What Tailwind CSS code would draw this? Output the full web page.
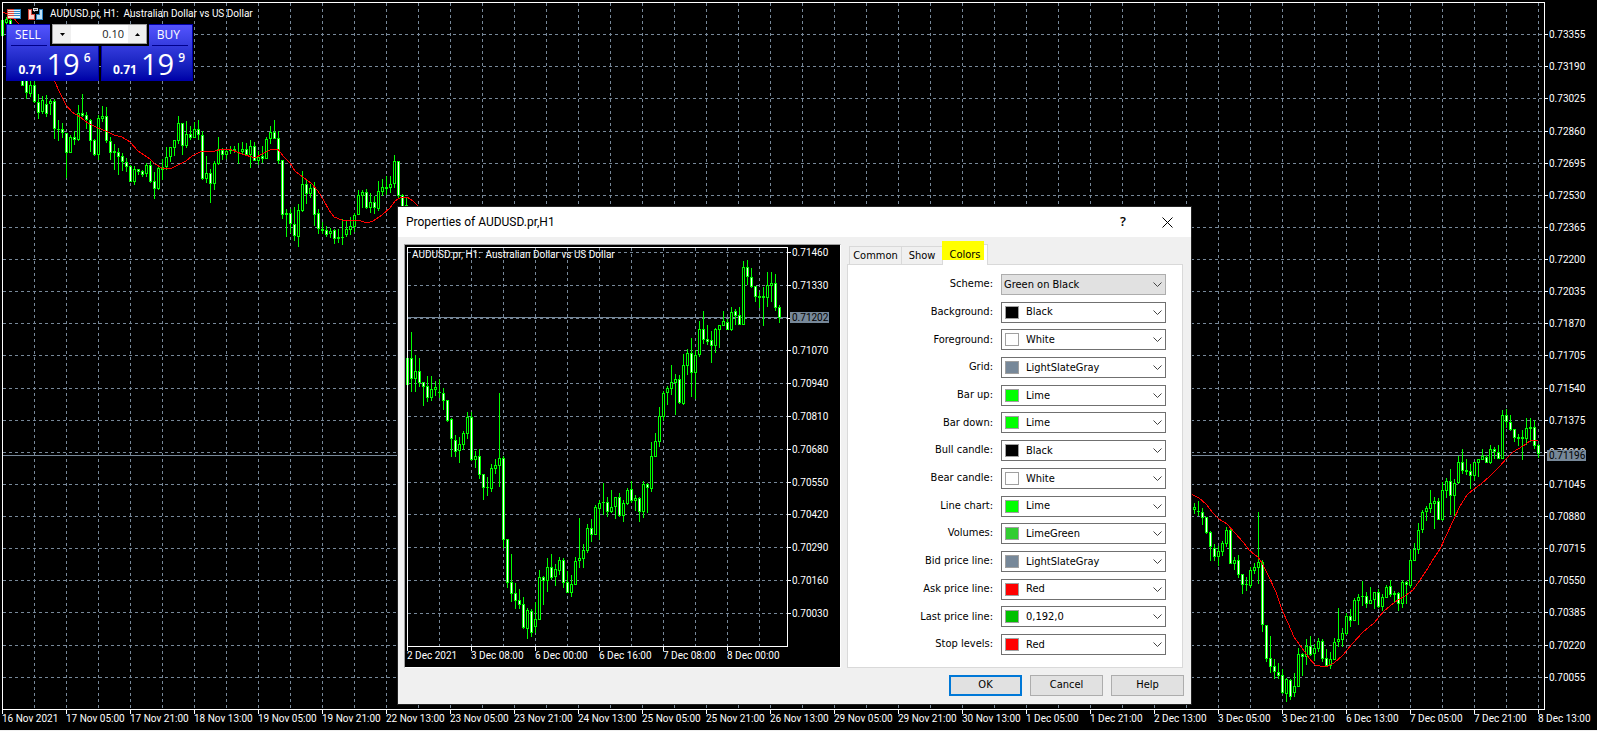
<!DOCTYPE html>
<html lang="en">
  <head>
    <meta charset="UTF-8" />
    <meta name="viewport" content="width=device-width, initial-scale=1.0" />
    <title>AUDUSD.pr, H1</title>
    <script src="https://cdn.jsdelivr.net/npm/@tailwindcss/browser@4"></script>
  </head>

  <body class="bg-black font-['DejaVu_Sans_Condensed','DejaVu_Sans',sans-serif] text-[11px]">
    <main class="relative h-screen min-h-[720px] overflow-hidden border-b border-[#f0f0f0]">
      <svg id="mainChart" class="block h-full w-full" role="img" aria-label="AUDUSD.pr H1 chart"></svg>

      <!-- chart caption -->
      <div class="absolute top-[6px] left-[7px] flex items-center gap-[7px] text-white">
        <svg width="14" height="12" viewBox="0 0 14 12" shape-rendering="crispEdges" aria-hidden="true">
          <path fill="#d9483b" d="M0 1h7v10H0z" />
          <path fill="#2d84c4" d="M7 1h7v10H7z" />
          <path fill="#ffe3de" d="M1 2h6v1H1zM1 4h6v1H1zM1 6h6v1H1zM1 8h6v2H1z" />
          <path fill="#e4f3fc" d="M7 2h6v1H7zM7 4h6v1H7zM7 6h6v1H7zM7 8h6v2H7z" />
        </svg>
        <svg width="15" height="12" viewBox="0 0 15 12" shape-rendering="crispEdges" aria-hidden="true">
          <path fill="#d9483b" d="M0 1h4v5h3v6H0z" />
          <path fill="#ffd5cf" d="M1 2h2v5h3v4H1z" />
          <path fill="#2d84c4" d="M15 1h-4v5H8v6h7z" />
          <path fill="#bfe2f8" d="M14 2h-2v5H9v4h5z" />
          <path fill="#ddd" d="M5 0h5v3H5z" />
          <path fill="#444" d="M6 1h3v1H6z" />
        </svg>
        <p class="font-['Roboto',sans-serif] leading-4 whitespace-pre text-[10px]">AUDUSD.pr, H1:  Australian Dollar vs US Dollar</p>
      </div>

      <!-- one click trading -->
      <section class="absolute top-6 left-[6px] flex gap-[2px] font-['Open_Sans','Noto_Sans',sans-serif] text-white">
        <button class="flex h-[57px] w-[93px] flex-col justify-between border border-[#0000a8] bg-linear-to-b from-[#5454ff] to-[#0000a8] text-left">
          <span class="ml-1 w-9 border-b border-[#00008c] pl-1 text-[12px] leading-5">SELL</span>
          <span class="flex w-full items-end justify-center gap-1 pb-[2px] pl-1">
            <span class="text-[12px] leading-4 font-bold">0.71</span>
            <span class="flex gap-1"><span class="text-[29px] leading-7">19</span><span class="text-[12px] leading-4 font-semibold">6</span></span>
          </span>
        </button>
        <button class="flex h-[57px] w-[92px] flex-col justify-between border border-[#0000a8] bg-linear-to-b from-[#5454ff] to-[#0000a8] text-right">
          <span class="mr-1 ml-auto w-9 border-b border-[#00008c] pr-2 text-[12px] leading-5">BUY</span>
          <span class="flex w-full items-end justify-center gap-1 pb-[2px] pl-1">
            <span class="text-[12px] leading-4 font-bold">0.71</span>
            <span class="flex gap-1"><span class="text-[29px] leading-7">19</span><span class="text-[12px] leading-4 font-semibold">9</span></span>
          </span>
        </button>
        <div class="absolute top-0 left-11 flex h-[22px] w-[99px] bg-black px-[2px] pb-[2px]">
          <div class="flex flex-1 border border-[#a0a0a0] bg-white text-black">
            <button class="flex w-[18px] items-center justify-center bg-[#f0f0f0]" aria-label="Decrease volume">
              <svg width="5" height="3" viewBox="0 0 5 3" aria-hidden="true"><path d="M0 0h5L2.5 3z" /></svg>
            </button>
            <input class="w-0 flex-1 bg-white pr-1 text-right text-[11px] leading-4 text-[#222]" value="0.10" aria-label="Volume" />
            <button class="flex w-[18px] items-center justify-center bg-[#f0f0f0]" aria-label="Increase volume">
              <svg width="5" height="3" viewBox="0 0 5 3" aria-hidden="true"><path d="M0 3h5L2.5 0z" /></svg>
            </button>
          </div>
        </div>
      </section>

      <!-- properties dialog -->
      <section class="absolute top-[207px] left-[398px] w-[793px] bg-[#f0f0f0] text-black outline outline-[#222]" role="dialog" aria-labelledby="dialogTitle">
        <header class="flex h-[30px] items-center bg-white pr-4 pl-2">
          <h1 id="dialogTitle" class="flex-1 font-['Roboto',sans-serif] text-[12px]">Properties of AUDUSD.pr,H1</h1>
          <button class="w-5 font-['Open_Sans',sans-serif] text-[13px] font-semibold" aria-label="Help on item">?</button>
          <button class="ml-7 mr-[2px] flex w-3 justify-center" aria-label="Close">
            <svg width="11" height="11" viewBox="0 0 11 11" aria-hidden="true"><path d="M.5.5l10 10M10.5.5l-10 10" stroke="#000" fill="none" /></svg>
          </button>
        </header>

        <div class="flex gap-[6px] pt-[7px] pr-2 pl-[6px]">
          <div class="relative flex-1 border border-t-[#a0a0a0] border-r-white border-b-white border-l-[#a0a0a0] bg-black">
            <svg id="previewChart" class="block h-[422px] w-full" role="img" aria-label="Preview of the color scheme"></svg>
            <p class="absolute top-0 left-[7px] font-['Roboto',sans-serif] leading-5 whitespace-pre text-[10px] text-white">AUDUSD.pr, H1:  Australian Dollar vs US Dollar</p>
          </div>

          <div class="flex w-[336px] flex-col">
            <nav class="relative flex h-5 items-end pl-[2px]" role="tablist">
              <button role="tab" class="h-[18px] w-[53px] border border-b-0 border-[#d9d9d9] pt-px">Common</button>
              <button role="tab" class="h-[18px] w-10 border-t border-[#d9d9d9] pt-px">Show</button>
              <button role="tab" aria-selected="true" class="relative -mb-px h-[21px] w-[46px] border border-b-0 border-[#d9d9d9] bg-white">
                <span class="absolute -top-1 -left-px h-[19px] w-[42px] bg-[#ffff00]" aria-hidden="true"></span>
                <span class="relative">Colors</span>
              </button>
            </nav>
            <form id="colors" class="flex flex-1 flex-col justify-between border border-[#d9d9d9] bg-white pt-[9px] pr-4 pb-3"></form>
          </div>
        </div>

        <footer class="flex justify-end gap-2 px-[7px] pt-[7px] pb-2">
          <button class="h-[21px] w-[73px] border-2 border-[#0078d7] bg-[#e1e1e1]">OK</button>
          <button class="h-[21px] w-[73px] border border-[#adadad] bg-[#e1e1e1]">Cancel</button>
          <button class="h-[21px] w-[73px] border border-[#adadad] bg-[#e1e1e1]">Help</button>
        </footer>
      </section>
    </main>

    <script>
      const LIME = "#00ff00";
      const SLATE = "#778899";

      // candles: high, body top, body bottom, low, 1 = bear
      const november = [
        [18, 20, 36, 37, 0], [17, 19, 23, 30, 0], [18, 20, 30, 40, 1], [30, 40, 55, 60, 1], [50, 55, 78, 80, 1],
        [60, 70, 86, 86, 1], [76, 78, 93, 99, 1], [80, 85, 94, 97, 0], [80, 85, 102, 103, 1], [94, 102, 113, 119, 1],
        [96, 100, 112, 114, 0], [95, 104, 114, 117, 1], [99, 101, 104, 115, 0], [99, 101, 129, 139, 1], [120, 129, 130, 141, 0],
        [123, 129, 133, 138, 1], [133, 133, 153, 178, 1], [135, 137, 153, 153, 0], [131, 137, 140, 145, 1], [105, 113, 140, 141, 0],
        [94, 113, 116, 117, 1], [112, 115, 120, 129, 1], [119, 120, 141, 152, 1], [139, 140, 155, 156, 1], [115, 118, 155, 160, 0],
        [106, 116, 119, 122, 0], [107, 116, 141, 143, 1], [137, 141, 153, 160, 1], [144, 151, 153, 170, 1], [148, 152, 157, 175, 1],
        [153, 156, 162, 171, 1], [158, 162, 167, 172, 1], [165, 166, 182, 182, 1], [166, 169, 182, 185, 0], [169, 169, 172, 175, 1],
        [170, 171, 175, 177, 1], [163, 165, 174, 177, 0], [161, 165, 182, 183, 1], [172, 181, 189, 199, 1], [167, 168, 189, 190, 0],
        [159, 167, 170, 180, 0], [147, 157, 167, 170, 0], [147, 147, 157, 162, 0], [140, 140, 148, 156, 0], [116, 123, 141, 144, 0],
        [123, 123, 146, 155, 1], [121, 134, 146, 148, 0], [126, 134, 138, 140, 1], [122, 129, 138, 138, 0], [120, 129, 135, 140, 1],
        [131, 135, 179, 180, 1], [156, 173, 179, 183, 0], [169, 173, 184, 203, 1], [161, 163, 184, 190, 0], [137, 149, 164, 165, 0],
        [148, 150, 155, 160, 1], [150, 151, 155, 159, 0], [146, 149, 151, 154, 0], [146, 149, 151, 153, 0], [143, 152, 153, 164, 0],
        [142, 149, 152, 155, 0], [143, 149, 155, 156, 1], [140, 146, 155, 168, 0], [142, 146, 161, 161, 1], [151, 157, 161, 165, 0],
        [146, 156, 159, 163, 1], [137, 139, 159, 159, 0], [126, 132, 139, 144, 0], [120, 132, 139, 139, 1], [131, 138, 161, 164, 1],
        [160, 160, 215, 219, 1], [209, 213, 215, 237, 0], [209, 213, 224, 233, 1], [207, 224, 236, 241, 1], [204, 210, 237, 247, 0],
        [171, 184, 211, 212, 0], [179, 184, 194, 204, 1], [184, 188, 194, 198, 0], [182, 187, 215, 226, 1], [209, 213, 229, 234, 1],
        [222, 229, 231, 234, 0], [226, 230, 235, 237, 1], [228, 231, 234, 238, 0], [229, 230, 239, 244, 1], [229, 237, 239, 243, 0],
        [219, 237, 238, 245, 0], [220, 229, 235, 237, 0], [217, 226, 230, 235, 0], [213, 215, 227, 232, 0], [190, 195, 215, 215, 0],
        [190, 192, 196, 208, 0], [189, 192, 208, 209, 1], [193, 202, 208, 213, 0], [196, 202, 208, 214, 1], [181, 191, 209, 211, 0],
        [179, 187, 192, 196, 0], [176, 187, 189, 195, 0], [176, 184, 188, 193, 0], [155, 161, 184, 188, 0], [161, 161, 196, 198, 1],
        [194, 195, 210, 212, 1], [198, 205, 212, 214, 0],
      ];

      const december = [
        [358, 358, 385, 386, 1], [332, 358, 379, 392, 1], [355, 371, 379, 392, 0], [358, 371, 383, 387, 1], [382, 382, 387, 406, 1],
        [376, 386, 398, 402, 1], [376, 389, 398, 401, 0], [381, 387, 390, 396, 0], [379, 392, 393, 398, 0], [388, 393, 401, 410, 1],
        [400, 400, 421, 422, 1], [418, 419, 439, 457, 1], [435, 440, 452, 457, 1], [437, 444, 451, 463, 0], [431, 433, 445, 450, 0],
        [412, 417, 434, 439, 0], [412, 417, 460, 461, 1], [451, 456, 460, 468, 0], [449, 456, 475, 479, 1], [474, 474, 488, 500, 1],
        [477, 487, 488, 496, 0], [464, 468, 489, 492, 0], [459, 465, 469, 474, 0], [393, 458, 466, 487, 0], [456, 458, 540, 548, 1],
        [539, 539, 583, 588, 1], [554, 582, 594, 602, 1], [583, 593, 601, 609, 1], [589, 600, 605, 609, 1], [597, 604, 628, 629, 1],
        [608, 610, 629, 639, 0], [609, 611, 633, 637, 1], [602, 619, 627, 633, 0], [570, 577, 620, 620, 0], [576, 577, 581, 605, 1],
        [558, 567, 581, 592, 0], [554, 567, 578, 580, 1], [564, 569, 577, 586, 0], [557, 560, 571, 575, 0], [558, 560, 583, 588, 1],
        [571, 582, 593, 593, 1], [575, 584, 593, 597, 0], [557, 561, 585, 585, 0], [518, 558, 561, 568, 0], [544, 550, 559, 568, 0],
        [524, 528, 551, 553, 0], [519, 528, 535, 542, 1], [505, 507, 535, 535, 0], [500, 503, 509, 540, 0], [483, 502, 503, 515, 0],
        [497, 502, 512, 517, 1], [490, 507, 512, 513, 0], [497, 497, 507, 519, 0], [493, 497, 516, 517, 1], [500, 503, 516, 522, 0],
        [488, 490, 504, 505, 0], [481, 489, 501, 503, 1], [495, 498, 501, 511, 0], [497, 498, 512, 522, 1], [481, 484, 512, 518, 0],
        [483, 484, 488, 513, 1], [442, 456, 489, 492, 0], [433, 441, 457, 457, 0], [407, 416, 442, 447, 0], [391, 393, 417, 421, 0],
        [386, 388, 393, 405, 0], [365, 382, 389, 395, 0], [374, 379, 383, 415, 0], [375, 379, 403, 404, 1], [354, 365, 404, 405, 0],
        [349, 353, 366, 375, 0], [338, 353, 373, 397, 1], [350, 355, 373, 399, 0], [321, 329, 355, 357, 0], [311, 329, 340, 344, 1],
        [325, 339, 342, 345, 1], [331, 340, 346, 363, 1], [328, 329, 346, 353, 0], [325, 325, 330, 348, 0], [311, 321, 326, 326, 0],
        [319, 322, 330, 330, 1], [307, 312, 330, 331, 0], [309, 311, 316, 325, 1], [307, 315, 325, 325, 1], [261, 267, 325, 325, 0],
        [260, 267, 277, 285, 1], [268, 277, 287, 288, 1], [286, 286, 297, 302, 1], [292, 296, 298, 308, 0], [287, 296, 298, 326, 0],
        [272, 285, 298, 307, 0], [272, 283, 286, 302, 0], [274, 283, 308, 311, 1], [305, 307, 318, 323, 1],
      ];

      // moving average, second half is measured from the last candle
      const maLeft = "3,12 12,16 17,22 40,50 55,82 60,93 66,105 72,112 80,117 88,123 98,128 106,131 114,135 122,137 130,142 138,151 144,155 150,159 155,164 162,168 172,168 180,164 186,161 192,156 200,152 215,151 222,149 232,150 242,154 255,158 262,154 270,150 278,149 284,157 290,163 295,171 304,178 311,183 318,191 324,201 329,210 334,217 342,220 350,220 361,221 367,223 373,221 382,215 390,208 395,201 400,198 407,197 413,201 421,209";
      const maRight = "-356,488 -347,494 -339,498 -332,504 -325,513 -319,519 -311,524 -303,533 -295,542 -288,551 -280,557 -276,563 -270,575 -262,592 -256,610 -250,623 -244,637 -236,648 -229,658 -223,665 -218,666 -210,666 -204,663 -195,655 -186,644 -175,632 -164,623 -154,611 -143,602 -133,596 -125,590 -118,580 -110,568 -104,558 -98,549 -92,536 -85,521 -78,506 -71,495 -64,489 -57,484 -49,477 -43,471 -38,466 -31,458 -25,452 -15,446 -8,441 0,440";

      const mainTimes = [
        "16 Nov 2021", "17 Nov 05:00", "17 Nov 21:00", "18 Nov 13:00", "19 Nov 05:00", "19 Nov 21:00", "22 Nov 13:00", "23 Nov 05:00",
        "23 Nov 21:00", "24 Nov 13:00", "25 Nov 05:00", "25 Nov 21:00", "26 Nov 13:00", "29 Nov 05:00", "29 Nov 21:00", "30 Nov 13:00",
        "1 Dec 05:00", "1 Dec 21:00", "2 Dec 13:00", "3 Dec 05:00", "3 Dec 21:00", "6 Dec 13:00", "7 Dec 05:00", "7 Dec 21:00", "8 Dec 13:00",
      ];
      const previewTimes = ["2 Dec 2021", "3 Dec 08:00", "6 Dec 00:00", "6 Dec 16:00", "7 Dec 08:00", "8 Dec 00:00"];

      const rect = (x, y, w, h, fill) => `<rect x="${x}" y="${y}" width="${w}" height="${h}" fill="${fill}"/>`;
      const text = (x, y, s, fill = "#fff") => `<text x="${x}" y="${y}" fill="${fill}">${s}</text>`;

      function drawCandles(list, x0, toY) {
        return list
          .map(([h, t, b, l, bear], i) => {
            const x = x0 + i * 4;
            const [hy, ty, by, ly] = [h, t, b, l].map((v) => Math.round(toY(v)));
            const body = Math.max(1, by - ty);
            let out = rect(x, hy, 1, Math.max(1, ly - hy), LIME) + rect(x - 1, ty, 3, body, LIME);
            if (body > 2) out += rect(x, ty + 1, 1, body - 2, bear ? "#fff" : "#000");
            return out;
          })
          .join("");
      }

      function drawFrame(c) {
        let out = "";
        for (let x = c.left + 32; x < c.right; x += 32)
          out += `<path d="M${x + 0.5} ${c.top + 1}V${c.bottom}" stroke="${SLATE}" stroke-dasharray="3 3"/>`;
        for (let i = 0; i < c.rows; i++) {
          const y = Math.round(c.firstRow + i * c.rowStep);
          out += `<path d="M${c.left + 1} ${y + 0.5}H${c.right}" stroke="${SLATE}" stroke-dasharray="3 3"/>`;
          out += rect(c.right, y, 4, 1, "#fff");
          if (i !== c.hiddenRow) out += text(c.right + 5, y + 4, (c.firstPrice - i * c.priceStep).toFixed(5));
        }
        out += rect(c.left, c.bid, c.right - c.left, 1, SLATE);
        return out;
      }

      function drawAxes(c) {
        let out = `<path d="M${c.left + 0.5} ${c.top + 0.5}H${c.right + 0.5}V${c.bottom + 0.5}H${c.left + 0.5}z" stroke="#fff" fill="none"/>`;
        c.times.forEach((label, i) => {
          const x = c.left + i * 64;
          out += rect(x, c.bottom, 1, 5, "#fff") + text(x, c.bottom + 13, label);
        });
        out += rect(c.right + 3, c.bid - 5, 39, 11, SLATE) + text(c.right + 5, c.bid + 4, c.bidLabel, "#000");
        return out;
      }

      const wrap = (s) => `<g shape-rendering="crispEdges" font-family="Roboto, sans-serif" font-size="10">${s}</g>`;

      function drawMain(svg) {
        const c = {
          left: 2, top: 2, right: svg.clientWidth - 53, bottom: svg.clientHeight - 21,
          rows: 21, firstRow: 34.15, rowStep: 32.13, firstPrice: 0.73355, priceStep: 0.00165,
          bid: 455, bidLabel: "0.71196", times: mainTimes,
        };
        const last = c.right - 6;
        svg.innerHTML = wrap(
          drawFrame(c) +
            drawCandles(november, c.left, (v) => v) +
            drawCandles(december, last - (december.length - 1) * 4, (v) => 403 + (v - 252) * 0.772) +
            `<polyline points="${maLeft}" fill="none" stroke="#f00"/>` +
            `<polyline points="${maRight}" fill="none" stroke="#f00" transform="translate(${last} 0)"/>` +
            drawAxes(c)
        );
      }

      function drawPreview(svg) {
        const c = {
          left: 2, top: 2, right: svg.clientWidth - 53, bottom: svg.clientHeight - 21,
          rows: 12, firstRow: 7, rowStep: 32.8, firstPrice: 0.7146, priceStep: 0.0013, hiddenRow: 2,
          bid: 72, bidLabel: "0.71202", times: previewTimes,
        };
        svg.innerHTML = wrap(drawFrame(c) + drawCandles(december, c.left, (v) => v - 245) + drawAxes(c));
      }

      const settings = [
        ["Scheme", "Green on Black"],
        ["Background", "Black", "#000000"],
        ["Foreground", "White", "#ffffff"],
        ["Grid", "LightSlateGray", "#778899"],
        ["Bar up", "Lime", "#00ff00"],
        ["Bar down", "Lime", "#00ff00"],
        ["Bull candle", "Black", "#000000"],
        ["Bear candle", "White", "#ffffff"],
        ["Line chart", "Lime", "#00ff00"],
        ["Volumes", "LimeGreen", "#32cd32"],
        ["Bid price line", "LightSlateGray", "#778899"],
        ["Ask price line", "Red", "#ff0000"],
        ["Last price line", "0,192,0", "#00c000"],
        ["Stop levels", "Red", "#ff0000"],
      ];

      document.getElementById("colors").innerHTML = settings
        .map(([name, value, color], i) => {
          const look = color ? "border-[#707070] bg-white pl-6" : "border-[#adadad] bg-[#e1e1e1] pl-[2px]";
          const swatch = color
            ? `<span class="pointer-events-none absolute top-1 left-1 h-[13px] w-[14px] border border-[#a0a0a0]" style="background:${color}"></span>`
            : "";
          return `
          <div class="flex items-center justify-end gap-2">
            <label for="opt${i}">${name}:</label>
            <div class="relative w-[165px]">
              <select id="opt${i}" class="block h-[21px] w-full appearance-none border pt-px ${look}"><option>${value}</option></select>
              ${swatch}
              <svg class="pointer-events-none absolute top-2 right-[4px]" width="9" height="6" viewBox="0 0 9 6" fill="none" stroke="#444" aria-hidden="true"><path d="M.5.5l4 4 4-4"/></svg>
            </div>
          </div>`;
        })
        .join("");

      // redraw whenever a chart gets a new size
      const watch = (id, draw) => {
        const svg = document.getElementById(id);
        new ResizeObserver(() => draw(svg)).observe(svg);
      };
      watch("mainChart", drawMain);
      watch("previewChart", drawPreview);
    </script>
  </body>
</html>
